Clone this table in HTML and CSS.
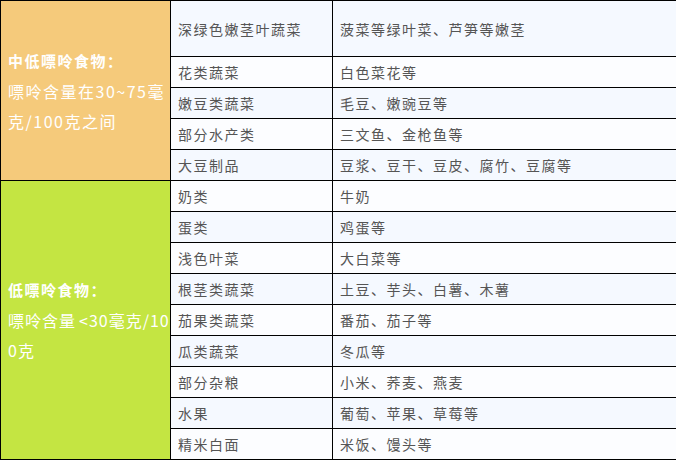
FILE: index.html
```html
<!DOCTYPE html>
<html lang="zh-CN">
<head>
<meta charset="utf-8">
<title>嘌呤含量表</title>
<link rel="stylesheet" href="styles.css">
</head>
<body>
<table class="purine">
  <tbody>
    <tr class="row-tall">
      <td class="group group-mid" rowspan="5">
        <p class="group-title">中低嘌呤食物：</p>
        <p class="group-desc">嘌呤含量在30~75毫克/100克之间</p>
      </td>
      <td class="kind">深绿色嫩茎叶蔬菜</td>
      <td class="example">菠菜等绿叶菜、芦笋等嫩茎</td>
    </tr>
    <tr><td class="kind">花类蔬菜</td><td class="example">白色菜花等</td></tr>
    <tr><td class="kind">嫩豆类蔬菜</td><td class="example">毛豆、嫩豌豆等</td></tr>
    <tr><td class="kind">部分水产类</td><td class="example">三文鱼、金枪鱼等</td></tr>
    <tr><td class="kind">大豆制品</td><td class="example">豆浆、豆干、豆皮、腐竹、豆腐等</td></tr>
    <tr>
      <td class="group group-low" rowspan="9">
        <p class="group-title">低嘌呤食物：</p>
        <p class="group-desc group-desc-tight">嘌呤含量<span class="lt">&lt;</span>30毫克/10<br>0克</p>
      </td>
      <td class="kind">奶类</td>
      <td class="example">牛奶</td>
    </tr>
    <tr><td class="kind">蛋类</td><td class="example">鸡蛋等</td></tr>
    <tr><td class="kind">浅色叶菜</td><td class="example">大白菜等</td></tr>
    <tr><td class="kind">根茎类蔬菜</td><td class="example">土豆、芋头、白薯、木薯</td></tr>
    <tr><td class="kind">茄果类蔬菜</td><td class="example">番茄、茄子等</td></tr>
    <tr><td class="kind">瓜类蔬菜</td><td class="example">冬瓜等</td></tr>
    <tr><td class="kind">部分杂粮</td><td class="example">小米、荞麦、燕麦</td></tr>
    <tr><td class="kind">水果</td><td class="example">葡萄、苹果、草莓等</td></tr>
    <tr><td class="kind">精米白面</td><td class="example">米饭、馒头等</td></tr>
  </tbody>
</table>
</body>
</html>
```

FILE: styles.css
```css
html, body {
  margin: 0;
  padding: 0;
  background: #ffffff;
  overflow: hidden;
}

.purine {
  border-collapse: separate;
  border-spacing: 0;
  table-layout: fixed;
  width: 690px;
  border-top: 1px solid #000;
  border-left: 1px solid #000;
  font-family: "Noto Sans CJK SC", "Noto Sans", sans-serif;
  font-size: 14px;
  letter-spacing: 1.5px;
  color: #555555;
}

.purine td {
  box-sizing: border-box;
  border-right: 1px solid #000;
  border-bottom: 1px solid #000;
  padding: 0 0 0 7px;
  height: 31px;
  line-height: 20px;
  vertical-align: middle;
  background: #fcfdff;
}

.purine tr:nth-child(odd) td {
  background: #f5f9ff;
}

.purine .row-tall td {
  height: 56px;
}

.purine td.group {
  width: 170px;
  padding: 0 0 0 7px;
  color: #ffffff;
  word-break: break-all;
}

.purine td.kind {
  width: 162px;
}

.purine td.group.group-mid {
  background: #f5ca7b;
}

.purine td.group.group-low {
  background: #c4e542;
}

.group-title,
.group-desc {
  margin: 0;
  line-height: 30px;
}

.group-title {
  font-weight: bold;
  font-size: 15px;
}

.group-desc {
  font-size: 16px;
  letter-spacing: 1.5px;
}

.group-desc-tight {
  letter-spacing: 1px;
  white-space: nowrap;
}

.group-desc .lt {
  margin-left: 3px;
}
```
